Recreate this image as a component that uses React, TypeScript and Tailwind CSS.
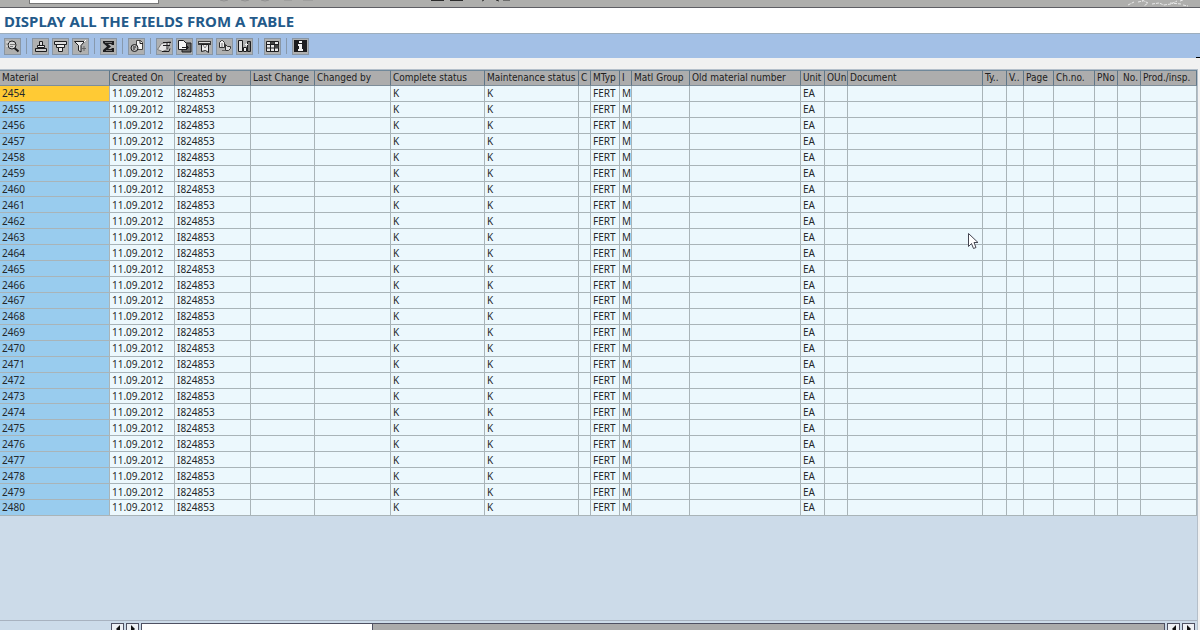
import type { ReactNode } from "react";
import clsx from "clsx";

type Column = {
  key: string;
  label: string;
  width: string;
  align?: "right";
};

const columns: Column[] = [
  { key: "material", label: "Material", width: "w-[110px]" },
  { key: "createdOn", label: "Created On", width: "w-[65px]" },
  { key: "createdBy", label: "Created by", width: "w-[76px]" },
  { key: "lastChange", label: "Last Change", width: "w-[64px]" },
  { key: "changedBy", label: "Changed by", width: "w-[76px]" },
  { key: "complete", label: "Complete status", width: "w-[94px]" },
  { key: "maintenance", label: "Maintenance status", width: "w-[94px]" },
  { key: "client", label: "C", width: "w-3" },
  { key: "type", label: "MTyp", width: "w-[29px]" },
  { key: "industry", label: "I", width: "w-3" },
  { key: "group", label: "Matl Group", width: "w-[58px]" },
  { key: "oldNumber", label: "Old material number", width: "w-[111px]" },
  { key: "unit", label: "Unit", width: "w-6" },
  { key: "orderUnit", label: "OUn", width: "w-[23px]" },
  { key: "document", label: "Document", width: "w-[135px]" },
  { key: "docType", label: "Ty..", width: "w-6" },
  { key: "version", label: "V..", width: "w-[17px]" },
  { key: "page", label: "Page", width: "w-[30px]" },
  { key: "change", label: "Ch.no.", width: "w-[41px]" },
  { key: "pageNo", label: "PNo", width: "w-[23px]" },
  { key: "sheets", label: "No.", width: "w-[23px]", align: "right" },
  { key: "inspection", label: "Prod./insp.", width: "w-auto" },
];

const rows: Record<string, string>[] = Array.from({ length: 27 }, (_, i) => ({
  material: String(2454 + i),
  createdOn: "11.09.2012",
  createdBy: "I824853",
  complete: "K",
  maintenance: "K",
  type: "FERT",
  industry: "M",
  unit: "EA",
}));

const ink = "#1d1d1f";

const tools: { label: string; icon: ReactNode }[][] = [
  [
    {
      label: "Details",
      icon: (
        <>
          <circle cx="8" cy="7" r="4" fill="#d8d8d8" stroke={ink} />
          <path d="M2 4h3M2 8h2" stroke="#eee" />
          <path d="M10.500 10l4 3.500" stroke={ink} strokeWidth="2" />
          <path d="M6 6.500h5M6 8.500h3" stroke="#777" />
        </>
      ),
    },
  ],
  [
    {
      label: "Sort ascending",
      icon: (
        <>
          <path d="M7.500 3.500h3v4h-3z" fill="#ddd" stroke={ink} />
          <path d="M5.500 7.500h7v2h-7z" fill="#eee" stroke={ink} />
          <path d="M3.500 10.500h11v3h-11z" fill="#ccc" stroke={ink} />
        </>
      ),
    },
    {
      label: "Sort descending",
      icon: (
        <>
          <path d="M2.500 3.500h12v3h-12z" fill="#ddd" stroke={ink} />
          <path d="M4.500 6.500h8v3h-8z" fill="#eee" stroke={ink} />
          <path d="M6.500 9.500h4v4h-4z" fill="#eee" stroke={ink} />
        </>
      ),
    },
    {
      label: "Set filter",
      icon: (
        <>
          <path d="M2.500 3.500h10l-3.500 4v6.500l-2.500-1.500v-5z" fill="#eee" stroke={ink} />
          <path d="M10 10.500h4M12 8v5" stroke="#666" />
          <path d="M12 4l2-2" stroke="#fff" />
        </>
      ),
    },
  ],
  [
    {
      label: "Total",
      icon: (
        <>
          <path d="M3 3h11v4h-2l-1-1H8l3 2.500L8 11h3l1-1h2v4H3v-2l4-3.500L3 5z" fill={ink} />
          <path d="M5 4.500h7M6 12.500h6" stroke="#777" />
        </>
      ),
    },
  ],
  [
    {
      label: "Print preview",
      icon: (
        <>
          <path d="M8.500 2.500h4l2 2v7h-6z" fill="#f4f4f4" stroke="#444" />
          <circle cx="6.500" cy="10" r="3.500" fill="#bbb" stroke={ink} />
          <path d="M12 2.500v3h3M5 9h3M5 11h2" stroke={ink} />
        </>
      ),
    },
  ],
  [
    {
      label: "Views",
      icon: (
        <>
          <path d="M1.500 11.500l4-6 9-2-3 8-5 2z" fill="#e4e4e4" stroke="#777" />
          <path d="M7 4.500h8M11 5v6M7 7.500h7M6 13.500h7l1-3" stroke={ink} />
        </>
      ),
    },
    {
      label: "Local file",
      icon: (
        <>
          <path d="M8 5h7v9H6v-3h2z" fill="#666" stroke={ink} />
          <path d="M2.500 2.500h5l3 3v6h-8z" fill="#f4f4f4" stroke={ink} />
          <path d="M6 9.500h6M10 7l2.500 2.500-2.500 2.500" stroke={ink} />
        </>
      ),
    },
    {
      label: "Mail recipient",
      icon: (
        <>
          <path d="M2 3h13v4H2z" fill="#3a3a3a" />
          <path d="M3 4.500h11" stroke="#ddd" />
          <path d="M5.500 6.500h7v8l-3-2-4 1z" fill="#eee" stroke={ink} />
          <path d="M7 7l2 3 2-3" stroke="#888" />
        </>
      ),
    },
    {
      label: "Word processing",
      icon: (
        <>
          <path d="M3.500 9.500v-5l2-2h1l2 2v5z" fill="#eee" stroke="#333" />
          <path d="M6 5v4" stroke="#777" />
          <path d="M9.500 6.500v6h3l2-2v-2h-3z" fill="#ddd" stroke="#333" />
          <path d="M6 12.500h3" stroke="#666" />
        </>
      ),
    },
    {
      label: "ABC analysis",
      icon: (
        <>
          <path d="M2.500 2.500h4v11h-4z" fill="#ddd" stroke={ink} />
          <path d="M7.500 9.500h3v4h-3z" fill="#eee" stroke={ink} />
          <path d="M11.500 13.500V3.500h3v10z" fill="#777" stroke={ink} />
          <path d="M9 6.500h3M10.500 5v3" stroke="#eee" />
        </>
      ),
    },
  ],
  [
    {
      label: "Change layout",
      icon: (
        <>
          <path d="M2.500 3.500h12v10h-12z" fill="#e8e8e8" stroke={ink} />
          <path d="M2 6.500h13M2 10h13M6.500 4v9M10.500 4v9" stroke={ink} />
          <path d="M6.500 4h4v2h-4zM10.500 7h4v3h-4z" fill="#444" />
        </>
      ),
    },
  ],
  [
    {
      label: "Information",
      icon: (
        <>
          <path d="M2 2h13v12H2z" fill={ink} />
          <path d="M7 3h3v2H7zM6 6h4v5h1v2H6v-2h1V8H6z" fill="#f4f4f4" />
        </>
      ),
    },
  ],
];

function ToolButton({ label, children }: { label: string; children: ReactNode }) {
  return (
    <button
      type="button"
      aria-label={label}
      title={label}
      className="size-[17px] border border-[#8996a4] bg-[#afb0b0]"
    >
      <svg viewBox="1 1 15 15" fill="none" className="size-full">
        {children}
      </svg>
    </button>
  );
}

function ScrollButton({ dir }: { dir: "left" | "right" }) {
  return (
    <button
      type="button"
      aria-label={`Scroll ${dir}`}
      className="flex h-3 w-[13px] shrink-0 items-center justify-center border border-[#4e5062] bg-[#eef1f5]"
    >
      <svg viewBox="0 0 8 8" className="size-2">
        <path d={dir === "left" ? "M6 0v8L2 4z" : "M2 0v8l4-4z"} fill="#111" />
      </svg>
    </button>
  );
}

/** Lower edge of the system toolbar, mostly scrolled out of view. */
function SystemBar() {
  return (
    <div className="flex h-[7px] shrink-0 items-start justify-between bg-[#aeaeac]">
      <div className="flex items-start">
        <input
          aria-label="Command"
          className="ml-[29px] h-1 w-[130px] border border-t-0 border-[#777] bg-white"
        />
        <svg viewBox="0 0 360 4" className="ml-[60px] h-1 w-[360px]" fill="none">
          <path d="M1 0l4 1 4-1M22 0l4 1 4-1M42 0l4 1 4-1M65 0h8M84 0h10" stroke="#8f8f8f" />
          <path d="M212 .5h13M231 .5h13M265 0l-2 1M277 0l3 1M284 0h7" stroke="#2c2c2c" />
        </svg>
      </div>
      <svg viewBox="0 0 64 7" className="mr-2.5 h-[7px] w-16" fill="none">
        <path
          d="M2 5l6-3M12 2l5-1M16 0l6 3-4 3M26 4l7-1 5 2M38 5l7-1 6-3M44 3l11 1M54 1l3-1M57 5l5 1"
          stroke="#e9e9e9"
          strokeDasharray="3 1"
        />
      </svg>
    </div>
  );
}

function MaterialTable() {
  return (
    <table className="h-[446px] w-full table-fixed border-separate border-spacing-0 text-[10px] leading-[14px]">
      <colgroup>
        {columns.map((c) => (
          <col key={c.key} className={c.width} />
        ))}
      </colgroup>
      <thead className="font-['DejaVu_Sans_Condensed','DejaVu_Sans',sans-serif]">
        <tr>
          {columns.map((c) => (
            <th
              key={c.key}
              scope="col"
              className={clsx(
                "overflow-hidden border-t border-r border-b border-t-[#70889a] border-r-[#5f7688] border-b-[#7d8d99] bg-[#adadad] p-0 pl-0.5 font-normal whitespace-nowrap text-[#202020]",
                c.align === "right" ? "pr-0.5 text-right" : "text-left",
              )}
            >
              {c.label}
            </th>
          ))}
        </tr>
      </thead>
      <tbody>
        {rows.map((row, i) => (
          <tr key={row.material}>
            {columns.map((c, j) => (
              <td
                key={c.key}
                className={clsx(
                  "overflow-hidden border-r border-b border-[#a9b4b8] p-0 pl-0.5 whitespace-nowrap text-[#25282b]",
                  j > 0 ? "bg-[#ecf8fd]" : i === 0 ? "bg-[#ffca34]" : "bg-[#99ccee]",
                )}
              >
                {row[c.key]}
              </td>
            ))}
          </tr>
        ))}
      </tbody>
    </table>
  );
}

export default function App() {
  return (
    <div className="flex h-screen flex-col overflow-hidden bg-[#f1f1f1] font-['Noto_Sans','DejaVu_Sans_Condensed',sans-serif]">
      <SystemBar />
      <header className="flex h-[26px] shrink-0 items-center border-t border-[#5e5e64] bg-white pl-1">
        <h1 className="text-[15px] leading-5 font-bold whitespace-nowrap text-[#235a8a]">
          DISPLAY ALL THE FIELDS FROM A TABLE
        </h1>
      </header>
      <div
        role="toolbar"
        aria-label="List functions"
        className="flex h-[25px] shrink-0 items-center border-t border-[#9daebd] bg-[#a3c0e6] pl-1"
      >
        {tools.map((group, i) => (
          <div key={group[0].label} className="flex items-center">
            {i > 0 && <span className="mx-[5px] h-4 w-px bg-[#8799ad]" />}
            <div className="flex gap-[3px]">
              {group.map((tool) => (
                <ToolButton key={tool.label} label={tool.label}>
                  {tool.icon}
                </ToolButton>
              ))}
            </div>
          </div>
        ))}
        <span className="ml-auto h-px w-1 self-end bg-black" />
      </div>
      <main className="mt-[11px] mr-0.5 flex min-h-0 flex-1 flex-col border-t border-r border-[#b4bfca] bg-[#ccdbe9]">
        <div className="min-h-0 flex-1 overflow-hidden">
          <MaterialTable />
        </div>
        <div className="flex h-2.5 shrink-0 items-start gap-0.5 overflow-hidden border-t border-[#a8b2bf] pt-0.5 pr-0.5 pl-[111px]">
          <ScrollButton dir="left" />
          <ScrollButton dir="right" />
          <div className="flex h-3 flex-1 border border-[#4e5062] bg-white">
            <div className="ml-[22.5%] flex-1 border-l border-[#4e5062] bg-[#ababab]" />
          </div>
          <ScrollButton dir="left" />
          <ScrollButton dir="right" />
        </div>
      </main>
      <svg viewBox="0 0 12 18" className="pointer-events-none absolute top-[232px] left-[967px] h-[18px] w-3">
        <path d="M1.500 1.500v13l3-3 2 5 2.500-1-2-5h4z" fill="#fff" stroke="#444450" />
      </svg>
    </div>
  );
}
